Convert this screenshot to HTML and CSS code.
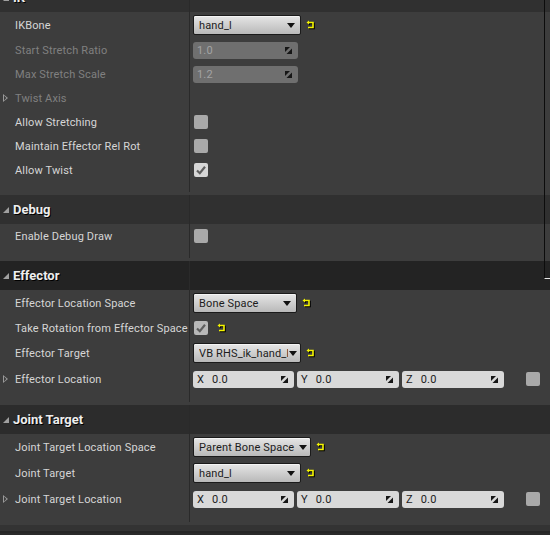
FILE: index.html
```html
<!DOCTYPE html>
<html>
<head>
<meta charset="utf-8">
<link rel="stylesheet" href="styles.css">
</head>
<body>
<div class="panel">
  <svg width="0" height="0" class="defs">
    <defs>
      <g id="reset">
        <path d="M2.5 2.5 H7 V7.5 H2" fill="none" stroke="#000" stroke-width="1.6" transform="translate(1 1)"/>
        <path d="M0.5 2.5 L3 0.5 V4.5 Z" fill="#000" transform="translate(1 1)"/>
        <path d="M2.5 2.5 H7 V7.5 H2" fill="none" stroke="#f4f400" stroke-width="1.6"/>
        <path d="M0.5 2.5 L3 0.5 V4.5 Z" fill="#f4f400"/>
      </g>
      <g id="drag">
        <path d="M0 0 H5 L0 5 Z" />
        <path d="M7 1.5 V7 H1.5 Z" />
      </g>
      <g id="check">
        <path d="M3 7.5 L5.8 10.2 L11 3.8" fill="none" stroke="#5e5e5e" stroke-width="2.2"/>
      </g>
    </defs>
  </svg>

  <section class="section first">
    <div class="header h-ik"><div class="name"><span class="tri"></span>IK</div><div class="value"></div></div>
    <div class="row tall"><div class="name">IKBone</div><div class="value"><div class="combo w107"><span>hand_l</span><i class="arrow"></i></div><svg class="reset" width="9" height="10"><use href="#reset"/></svg></div></div>
    <div class="row"><div class="name dis">Start Stretch Ratio</div><div class="value"><div class="num dis w105"><span>1.0</span><svg class="drag" width="7" height="7"><use href="#drag"/></svg></div></div></div>
    <div class="row"><div class="name dis">Max Stretch Scale</div><div class="value"><div class="num dis w105"><span>1.2</span><svg class="drag" width="7" height="7"><use href="#drag"/></svg></div></div></div>
    <div class="row"><div class="name dis"><span class="exp"></span>Twist Axis</div><div class="value"></div></div>
    <div class="row"><div class="name">Allow Stretching</div><div class="value"><div class="cb"></div></div></div>
    <div class="row"><div class="name">Maintain Effector Rel Rot</div><div class="value"><div class="cb"></div></div></div>
    <div class="row"><div class="name">Allow Twist</div><div class="value"><div class="cb on"><svg width="14" height="14"><use href="#check"/></svg></div></div></div>
    <div class="tail"><div class="name"></div><div></div></div>
    <div class="gap"></div>
  </section>

  <section class="section">
    <div class="header h-debug"><div class="name"><span class="tri"></span>Debug</div><div class="value"></div></div>
    <div class="row"><div class="name">Enable Debug Draw</div><div class="value"><div class="cb"></div></div></div>
    <div class="tail"><div class="name"></div><div></div></div>
    <div class="gap"></div>
  </section>

  <section class="section">
    <div class="header h-eff"><div class="name"><span class="tri"></span>Effector</div><div class="value"></div></div>
    <div class="row tall"><div class="name">Effector Location Space</div><div class="value"><div class="combo w104"><span>Bone Space</span><i class="arrow"></i></div><svg class="reset" width="9" height="10"><use href="#reset"/></svg></div></div>
    <div class="row"><div class="name">Take Rotation from Effector Space</div><div class="value"><div class="cb on mid"><svg width="14" height="14"><use href="#check"/></svg></div><svg class="reset r2" width="9" height="10"><use href="#reset"/></svg></div></div>
    <div class="row tall"><div class="name">Effector Target</div><div class="value"><div class="combo w108"><span>VB RHS_ik_hand_l</span><i class="arrow"></i></div><svg class="reset" width="9" height="10"><use href="#reset"/></svg></div></div>
    <div class="row tall"><div class="name"><span class="exp"></span>Effector Location</div><div class="value vec">
      <div class="num"><span><b>X</b>0.0</span><svg class="drag" width="7" height="7"><use href="#drag"/></svg></div>
      <div class="num"><span><b>Y</b>0.0</span><svg class="drag" width="7" height="7"><use href="#drag"/></svg></div>
      <div class="num"><span><b>Z</b>0.0</span><svg class="drag" width="7" height="7"><use href="#drag"/></svg></div>
      <div class="cb end"></div>
    </div></div>
    <div class="tail"><div class="name"></div><div></div></div>
    <div class="gap"></div>
  </section>

  <section class="section">
    <div class="header h-joint"><div class="name"><span class="tri"></span>Joint Target</div><div class="value"></div></div>
    <div class="row tall"><div class="name">Joint Target Location Space</div><div class="value"><div class="combo w118"><span>Parent Bone Space</span><i class="arrow"></i></div><svg class="reset" width="9" height="10"><use href="#reset"/></svg></div></div>
    <div class="row tall"><div class="name">Joint Target</div><div class="value"><div class="combo w107"><span>hand_l</span><i class="arrow"></i></div><svg class="reset" width="9" height="10"><use href="#reset"/></svg></div></div>
    <div class="row tall"><div class="name"><span class="exp"></span>Joint Target Location</div><div class="value vec">
      <div class="num"><span><b>X</b>0.0</span><svg class="drag" width="7" height="7"><use href="#drag"/></svg></div>
      <div class="num"><span><b>Y</b>0.0</span><svg class="drag" width="7" height="7"><use href="#drag"/></svg></div>
      <div class="num"><span><b>Z</b>0.0</span><svg class="drag" width="7" height="7"><use href="#drag"/></svg></div>
      <div class="cb end"></div>
    </div></div>
    <div class="tail"><div class="name"></div><div></div></div>
    <div class="gap"></div>
  </section>
  <div class="footer"></div>
  <div class="edge"></div>
</div>
</body>
</html>
```
FILE: styles.css
```css
* { box-sizing: border-box; }
html, body { margin: 0; padding: 0; }
body {
  background: #2a2a2a;
  font-family: Roboto, "Liberation Sans", sans-serif;
  font-size: 11px;
  letter-spacing: 0.15px;
  color: #d6d6d6;
  width: 550px;
  height: 535px;
  overflow: hidden;
}
.defs { position: absolute; }
.panel { position: relative; width: 550px; background: #3d3d3d; }
.section.first { margin-top: -17px; }

.header, .row, .tail {
  display: grid;
  grid-template-columns: 190px 1fr;
}
.name {
  border-right: 1px solid #2a2a2a;
  display: flex;
  align-items: center;
  padding-left: 15px;
  white-space: nowrap;
  position: relative;
}
.value {
  display: flex;
  align-items: center;
  padding-left: 3px;
}

.header { height: 29px; }
.header .name {
  padding-left: 13px;
  font-size: 13px;
  font-weight: bold;
  letter-spacing: 0;
  color: #eeeeee;
  text-shadow: 1px 1px 0 #000;
}
.h-ik { background: #303030; }
.h-debug { background: #303030; }
.h-eff { background: #232323; }
.h-joint { background: #2c2c2c; }

.tri {
  position: absolute;
  left: 3px;
  top: 12px;
  width: 0; height: 0;
  border-left: 6px solid transparent;
  border-bottom: 6px solid #a0a0a0;
}

.exp {
  position: absolute;
  left: 3px;
  top: 8px;
  width: 5px;
  height: 8px;
  background: #9a9a9a;
  clip-path: polygon(0 0, 100% 50%, 0 100%, 0 0, 1px 1.6px, 1px calc(100% - 1.6px), calc(100% - 1.6px) 50%, 1px 1.6px);
}
.row.tall .exp { top: 9px; }

.row { height: 24px; }
.row.tall { height: 26px; }
.tail { height: 10px; }
.gap { height: 3px; }
.footer { height: 8px; background: #333333; border-bottom: 2px solid #262626; }

.dis { color: #808080; }

.combo {
  height: 20px;
  border: 1px solid #1a1a1a;
  border-radius: 2px;
  background: linear-gradient(#e6e6e6, #b9b9b9);
  color: #1c1c1c;
  display: flex;
  align-items: center;
  padding-left: 5px;
  padding-right: 5px;
  box-shadow: inset 0 1px 0 #f4f4f4;
}
.combo span { flex: 1; overflow: hidden; white-space: nowrap; }
.combo .arrow {
  flex: none;
  width: 0; height: 0;
  border-left: 4.5px solid transparent;
  border-right: 4.5px solid transparent;
  border-top: 5px solid #111;
  margin-left: 1px;
}
.w104 { width: 104px; }
.w107 { width: 108px; }
.w108 { width: 108px; padding-right: 3px; }
.w118 { width: 118px; padding-right: 3px; }

.reset { margin-left: 5px; margin-top: -1px; flex: none; }
.reset.r2 { margin-left: 9px; }

.num {
  height: 17px;
  border-radius: 3px;
  background: #d9d9d9;
  color: #1c1c1c;
  display: flex;
  align-items: center;
  padding-left: 4px;
  padding-right: 6px;
}
.num span { flex: 1; white-space: nowrap; }
.num b { font-weight: normal; margin-right: 8px; }
.num .drag { fill: #161616; flex: none; }
.num.dis { background: #6f6f6f; color: #a3a3a3; }
.w105 { width: 105px; }

.vec { padding-left: 3px; gap: 3px; }
.vec .num { width: 102px; }
.vec .num:first-child { width: 101px; }

.cb {
  width: 14px;
  height: 14px;
  border-radius: 2px;
  background: #a9a9a9;
  margin-left: 1px;
  flex: none;
}
.cb svg { display: block; }
.cb.on { background: #d6d6d6; }
.cb.on.mid { background: #b8b8b8; }
.cb.end { margin-left: 19px; }

.edge {
  position: absolute;
  right: 0;
  top: 0;
  width: 6px;
  height: 296px;
  border-left: 1px solid #0c0c0c;
  border-bottom: 1px solid #e8e8e8;
}
```
